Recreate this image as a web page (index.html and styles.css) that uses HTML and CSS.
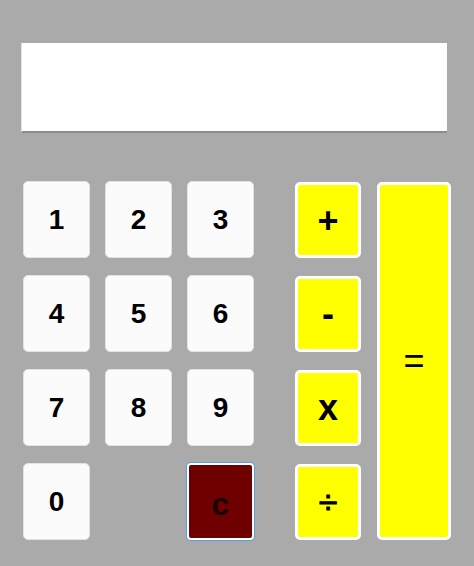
FILE: index.html
```html
<!DOCTYPE html>
<html lang="en">
<head>
<meta charset="utf-8">
<title>Calculator</title>
<link rel="stylesheet" href="styles.css">
</head>
<body>
<div class="calc">
  <div class="display"></div>
  <div class="keys">
    <button class="key digit col1">1</button>
    <button class="key digit col2">2</button>
    <button class="key digit col3">3</button>
    <button class="key op op-plus">+</button>
    <button class="key op eq">=</button>
    <button class="key digit col1">4</button>
    <button class="key digit col2">5</button>
    <button class="key digit col3">6</button>
    <button class="key op op-minus">-</button>
    <button class="key digit col1">7</button>
    <button class="key digit col2">8</button>
    <button class="key digit col3">9</button>
    <button class="key op op-times">x</button>
    <button class="key digit col1">0</button>
    <button class="key clear">c</button>
    <button class="key op op-div">÷</button>
  </div>
</div>
</body>
</html>
```

FILE: styles.css
```css
html, body {
  margin: 0;
  padding: 0;
  background: #aaaaaa;
  height: 100%;
}

.calc {
  padding: 43px 0 0 21px;
  width: 426px;
  font-family: "Liberation Sans", Arial, sans-serif;
}

.display {
  height: 88px;
  background: #ffffff;
  border-left: 1px solid #e4e4e4;
  border-bottom: 2px solid #8c8c8c;
  box-sizing: content-box;
}

.keys {
  margin-top: 48px;
  margin-left: 2px;
  display: grid;
  grid-template-columns: 67px 67px 67px 11px 66px 75px;
  grid-template-rows: repeat(4, 77px);
  column-gap: 15px;
  row-gap: 17px;
}

.key {
  margin: 0;
  padding: 0;
  font-family: "Liberation Sans", Arial, sans-serif;
  font-weight: bold;
  color: #000;
  cursor: pointer;
  display: flex;
  align-items: center;
  justify-content: center;
  box-sizing: border-box;
}

.col1 { grid-column: 1; }
.col2 { grid-column: 2; }
.col3 { grid-column: 3; }

.digit {
  background: #fbfbfb;
  border: 1px solid #e2e2e2;
  border-radius: 5px;
  font-size: 28px;
}

.op {
  grid-column: 5;
  background: #ffff00;
  border: 3px solid #ffffff;
  border-radius: 5px;
  font-size: 36px;
  margin-top: 1px;
}

.op-plus { grid-row: 1; padding-top: 2px; }
.op-minus { grid-row: 2; }
.op-times { grid-row: 3; }
.op-div { grid-row: 4; font-size: 34px; font-weight: normal; -webkit-text-stroke: 1px #000; }

.eq {
  grid-column: 6;
  grid-row: 1 / span 4;
  font-weight: normal;
  font-size: 36px;
  margin-left: 1px;
}

.clear {
  grid-column: 3;
  grid-row: 4;
  background: #6e0000;
  border: 2px solid #ffffff;
  border-radius: 4px;
  box-shadow: 0 0 0 1px #5c9fd8;
  color: #1a0000;
  font-size: 32px;
  padding-top: 6px;
}
```
